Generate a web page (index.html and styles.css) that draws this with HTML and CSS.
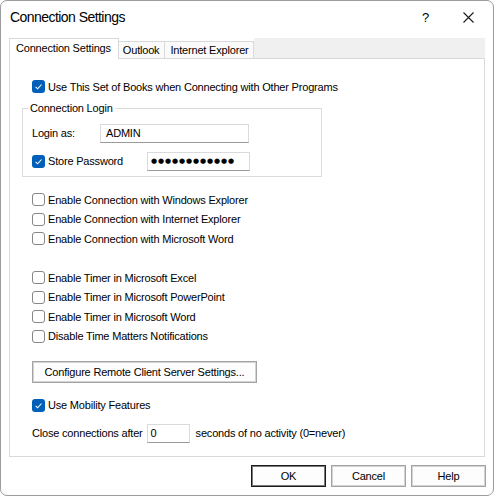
FILE: index.html
```html
<!DOCTYPE html>
<html>
<head>
<meta charset="utf-8">
<link rel="stylesheet" href="styles.css">
</head>
<body>
<div class="window">
  <div class="titlebar">
    <span class="title">Connection Settings</span>
    <span class="help-q">?</span>
    <span class="close-x"><svg width="11" height="11" viewBox="0 0 11 11"><path d="M0.5 0.5 L10.5 10.5 M10.5 0.5 L0.5 10.5" stroke="#1a1a1a" stroke-width="1.1" fill="none"/></svg></span>
  </div>
  <div class="content">
    <div class="tabs">
      <div class="tab active">Connection Settings</div>
      <div class="tab outlook">Outlook</div>
      <div class="tab ie">Internet Explorer</div>
      <div class="tab-fill"></div>
    </div>
    <div class="panel">
      <div class="row first">
        <span class="cb on"><svg width="13" height="13" viewBox="0 0 13 13"><rect width="13" height="13" rx="3" fill="#005fb8"/><path d="M3.6 6.9 L5.6 8.8 L9.5 4.5" stroke="#fff" stroke-width="1.1" fill="none"/></svg></span>
        <span class="lbl">Use This Set of Books when Connecting with Other Programs</span>
      </div>

      <div class="group">
        <span class="legend">Connection Login</span>
        <div class="grow">
          <span class="field-lbl login">Login as:</span>
          <span class="edit w-login">ADMIN</span>
        </div>
        <div class="grow second">
          <span class="field-lbl pass">
            <span class="cb on"><svg width="13" height="13" viewBox="0 0 13 13"><rect width="13" height="13" rx="3" fill="#005fb8"/><path d="M3.6 6.9 L5.6 8.8 L9.5 4.5" stroke="#fff" stroke-width="1.1" fill="none"/></svg></span>
            <span class="lbl">Store Password</span>
          </span>
          <span class="edit w-pass"><span class="dots">●●●●●●●●●●●●</span></span>
        </div>
      </div>

      <div class="block b1">
        <div class="row"><span class="cb off"></span><span class="lbl">Enable Connection with Windows Explorer</span></div>
        <div class="row"><span class="cb off"></span><span class="lbl">Enable Connection with Internet Explorer</span></div>
        <div class="row"><span class="cb off"></span><span class="lbl">Enable Connection with Microsoft Word</span></div>
      </div>

      <div class="block b2">
        <div class="row"><span class="cb off"></span><span class="lbl">Enable Timer in Microsoft Excel</span></div>
        <div class="row"><span class="cb off"></span><span class="lbl">Enable Timer in Microsoft PowerPoint</span></div>
        <div class="row"><span class="cb off"></span><span class="lbl">Enable Timer in Microsoft Word</span></div>
        <div class="row"><span class="cb off"></span><span class="lbl">Disable Time Matters Notifications</span></div>
      </div>

      <div class="btn wide">Configure Remote Client Server Settings...</div>

      <div class="row mobility">
        <span class="cb on"><svg width="13" height="13" viewBox="0 0 13 13"><rect width="13" height="13" rx="3" fill="#005fb8"/><path d="M3.6 6.9 L5.6 8.8 L9.5 4.5" stroke="#fff" stroke-width="1.1" fill="none"/></svg></span>
        <span class="lbl">Use Mobility Features</span>
      </div>

      <div class="close-row">
        <span>Close connections after</span>
        <span class="edit w-sec">0</span>
        <span>seconds of no activity (0=never)</span>
      </div>
    </div>
    <div class="buttons">
      <div class="btn dlg default">OK</div>
      <div class="btn dlg">Cancel</div>
      <div class="btn dlg">Help</div>
    </div>
  </div>
</div>
</body>
</html>
```
FILE: styles.css
```css
html, body {
  margin: 0;
  padding: 0;
  background: #ffffff;
}
body {
  width: 495px;
  height: 496px;
  overflow: hidden;
  font-family: "Liberation Sans", Arial, sans-serif;
  font-size: 11px;
  letter-spacing: -0.19px;
  color: #000;
}
.window {
  box-sizing: border-box;
  width: 494px;
  height: 496px;
  border: 1px solid #9c9c9c;
  border-radius: 7px;
  background: #fff;
}
.titlebar {
  height: 37px;
  display: flex;
  align-items: center;
  padding-left: 9px;
}
.title {
  font-size: 14px;
  letter-spacing: -0.55px;
  flex: 1;
  padding-bottom: 5px;
}
.help-q {
  font-size: 13px;
  width: 14px;
  margin-right: 27px;
  padding-bottom: 5px;
}
.close-x {
  width: 11px;
  height: 11px;
  margin-right: 19px;
  margin-bottom: 5px;
  display: flex;
}
.content {
  padding: 0 8px;
}
.tabs {
  display: flex;
  align-items: flex-end;
  height: 21px;
}
.tab {
  box-sizing: border-box;
  height: 17px;
  margin-bottom: 1px;
  border: 1px solid #d9d9d9;
  border-bottom: none;
  border-left: none;
  background: #fafafa;
  display: flex;
  align-items: center;
  line-height: 14px;
}
.tab.active {
  height: 21px;
  margin-bottom: 0;
  border-left: 1px solid #d9d9d9;
  background: #fff;
  padding: 0 7px 2px 6px;
  position: relative;
  z-index: 1;
}
.tab.outlook {
  padding: 0 5px 0 4px;
}
.tab.ie {
  padding: 0 4px 0 5px;
}
.tab-fill {
  flex: 1;
  height: 20px;
  margin-bottom: 1px;
  background: #f0f0f0;
}
.panel {
  box-sizing: border-box;
  height: 399px;
  margin-top: -1px;
  border: 1px solid #d9d9d9;
  background: #fff;
  padding: 18px 0 0 12px;
}
.row {
  height: 19.5px;
  display: flex;
  align-items: center;
}
.row.first {
  height: 19px;
  margin-left: 10px;
}
.cb {
  width: 13px;
  height: 13px;
  flex: none;
  display: flex;
  margin-right: 3px;
}
.cb.off {
  box-sizing: border-box;
  border: 1px solid #878787;
  border-radius: 3px;
  background: #fff;
}
.lbl {
  line-height: 14px;
}
.group {
  position: relative;
  box-sizing: border-box;
  width: 300px;
  margin-top: 12px;
  border: 1px solid #dcdcdc;
  padding: 14px 9px 5px 9px;
}
.legend {
  position: absolute;
  top: -8px;
  left: 5px;
  padding: 0 2px;
  background: #fff;
  line-height: 14px;
}
.grow {
  height: 20px;
  display: flex;
  align-items: center;
}
.grow.second {
  margin-top: 8px;
}
.field-lbl {
  display: flex;
  align-items: center;
}
.field-lbl.login {
  width: 68px;
}
.field-lbl.pass {
  width: 115px;
}
.edit {
  box-sizing: border-box;
  height: 19px;
  border: 1px solid #dadada;
  border-bottom-color: #9a9a9a;
  background: #fff;
  display: flex;
  align-items: center;
  padding-left: 5px;
  line-height: 14px;
}
.w-login { width: 149px; }
.w-pass { width: 103px; padding-left: 3px; }
.w-sec { width: 43px; padding-left: 3px; margin: 0 6px 0 4px; }
.dots {
  font-family: "DejaVu Sans", sans-serif;
  font-size: 7px;
  letter-spacing: 0.9px;
}
.block {
  margin-left: 10px;
}
.block.b1 {
  margin-top: 13px;
}
.block.b2 {
  margin-top: 19.5px;
}
.btn {
  box-sizing: border-box;
  height: 22px;
  display: flex;
  align-items: center;
  justify-content: center;
  border: 1px solid #a3a3a3;
  box-shadow: inset 0 0 0 1px #d4d4d4;
  background: #fdfdfd;
}
.btn.wide {
  width: 225px;
  margin: 15px 0 0 10px;
}
.row.mobility {
  margin-top: 12.5px;
  margin-left: 10px;
}
.close-row {
  height: 20px;
  margin-top: 8px;
  display: flex;
  align-items: center;
  margin-left: 10px;
}
.buttons {
  display: flex;
  justify-content: flex-end;
  gap: 5px;
  margin-top: 8px;
  margin-right: -1px;
}
.btn.dlg {
  width: 75px;
}
.btn.default {
  border-color: #1a1a1a;
  box-shadow: inset 0 0 0 1px #7a7a7a;
}
```
